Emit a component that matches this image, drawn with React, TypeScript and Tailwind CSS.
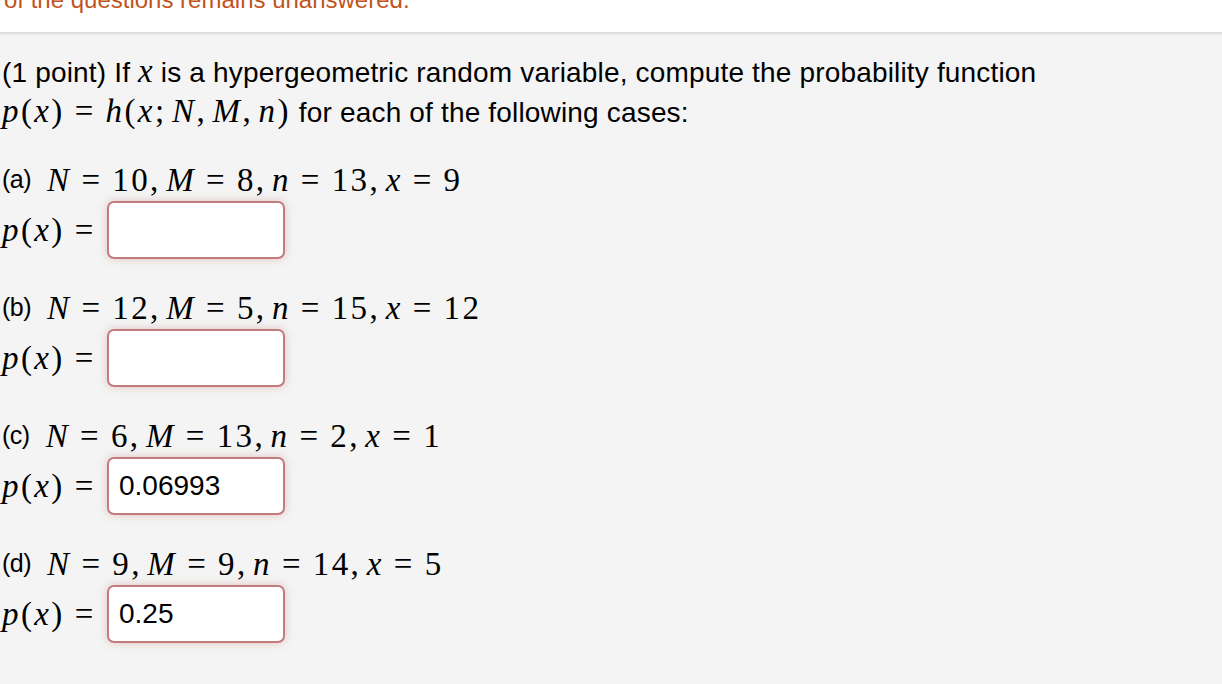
import React from "react";

const sans = "font-['Liberation_Sans',Arial,sans-serif]";
const serif = "font-['Liberation_Serif','Times_New_Roman',serif]";
const math = `${serif} text-[33px] tracking-[2.4px] leading-none`;

function V({ children }: { children: React.ReactNode }) {
  return <span className="italic">{children}</span>;
}

function Eq() {
  return <span className="mx-[0.3em]">=</span>;
}

function Comma() {
  return <span className="mr-[0.167em]">,</span>;
}

type Part = { label: string; N: string; M: string; n: string; x: string; answer: string };

const parts: Part[] = [
  { label: "(a)", N: "10", M: "8", n: "13", x: "9", answer: "" },
  { label: "(b)", N: "12", M: "5", n: "15", x: "12", answer: "" },
  { label: "(c)", N: "6", M: "13", n: "2", x: "1", answer: "0.06993" },
  { label: "(d)", N: "9", M: "9", n: "14", x: "5", answer: "0.25" },
];

function PartBlock({ p }: { p: Part }) {
  return (
    <div className="mt-[29px] first:mt-0">
      <div className="h-[40px] flex items-center whitespace-nowrap">
        <span className={`${sans} text-[25px] tracking-[-0.5px]`}>{p.label}</span>
        <span className={`${math} ml-[16px]`}>
          <V>N</V><Eq />{p.N}<Comma />
          <V>M</V><Eq />{p.M}<Comma />
          <V>n</V><Eq />{p.n}<Comma />
          <V>x</V><Eq />{p.x}
        </span>
      </div>
      <div className="mt-[1px] h-[58px] flex items-center">
        <span className={`${math} w-[105px] shrink-0`}>
          <V>p</V>(<V>x</V>)<span className="ml-[0.3em]">=</span>
        </span>
        <input
          readOnly
          value={p.answer}
          className={`w-[178px] h-[58px] rounded-[7px] bg-white border-2 border-[#c47b7b] shadow-[0_0_8px_rgba(190,100,100,0.35)] px-[10px] ${sans} text-[28px] text-black outline-none`}
        />
      </div>
    </div>
  );
}

export default function App() {
  return (
    <div className="w-[1222px] h-[684px] overflow-hidden bg-[#f4f4f4] text-black">
      <div className="h-[32px] bg-white overflow-hidden">
        <div className={`${sans} text-[24px] text-[#c2531c] leading-none -mt-[12px] ml-[4px] whitespace-nowrap`}>
          of the questions remains unanswered.
        </div>
      </div>
      <div className="h-[4px] bg-gradient-to-b from-[#dadada] to-[#f4f4f4]" />
      <div className="pt-[17px] pl-[2px]">
        <div className={`${sans} text-[28px] leading-[40px] tracking-[0.17px]`}>
          <div className="whitespace-nowrap">
            (1 point) If <span className={`${serif} italic text-[33px] leading-none`}>x</span> is a hypergeometric random variable, compute the probability function
          </div>
          <div className="whitespace-nowrap">
            <span className={math}>
              <V>p</V>(<V>x</V>)<Eq /><V>h</V>(<V>x</V>;<span className="mr-[0.167em]" /><V>N</V><Comma /><V>M</V><Comma /><V>n</V>)
            </span>{" "}
            for each of the following cases:
          </div>
        </div>
        <div className="mt-[27px]">
          {parts.map((p) => (
            <PartBlock key={p.label} p={p} />
          ))}
        </div>
      </div>
    </div>
  );
}
